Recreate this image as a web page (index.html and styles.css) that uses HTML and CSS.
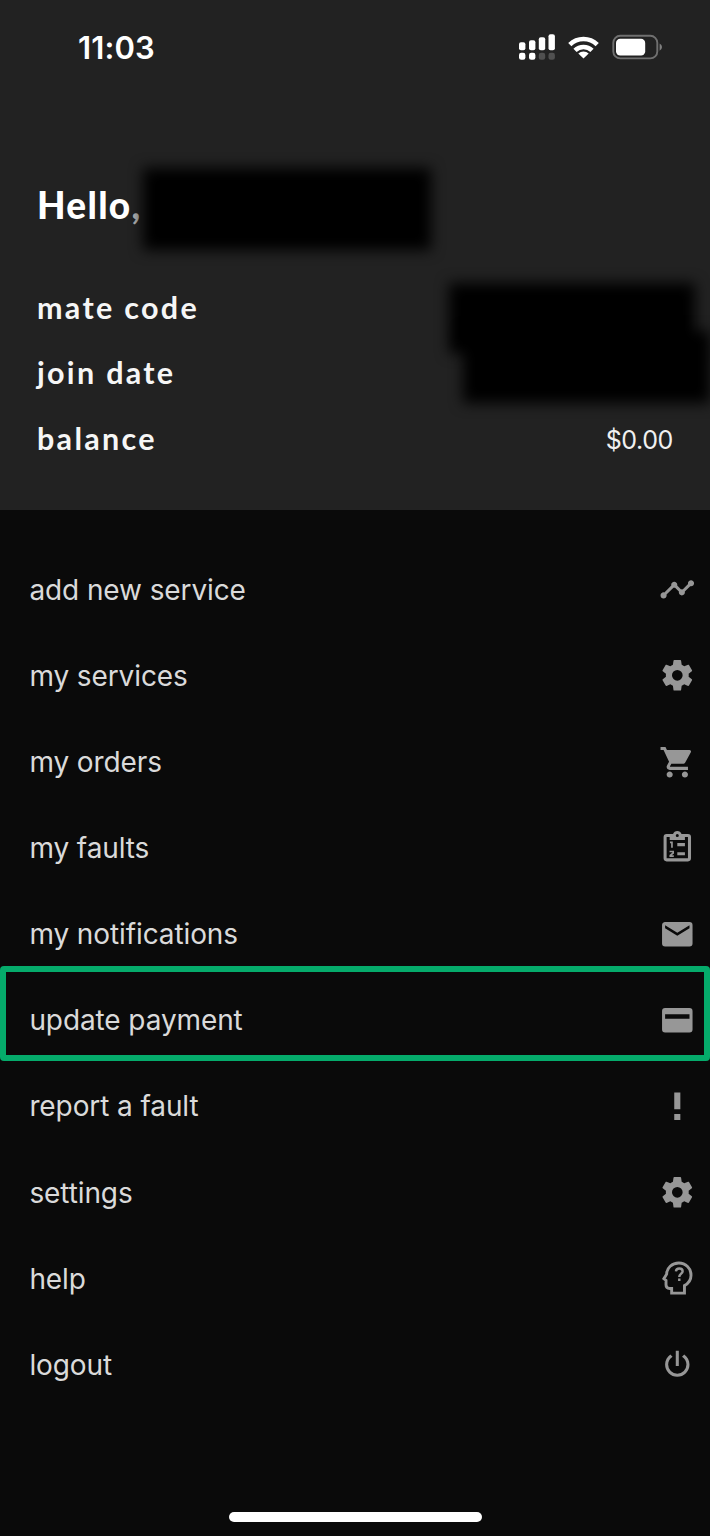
FILE: index.html
```html
<!DOCTYPE html>
<html lang="en">
<head>
<meta charset="utf-8">
<title>Account menu</title>
<link rel="stylesheet" href="styles.css">
</head>
<body>
<div class="screen">
  <header class="profile">
    <div class="status">
      <span class="time">11:03</span>
      <svg class="status-icons" width="146" height="30" viewBox="517 32 146 30">
        <g fill="#fff">
          <rect x="519" y="42.3" width="6.4" height="8" rx="2"/>
          <rect x="529" y="40.3" width="6.4" height="10" rx="2"/>
          <rect x="538.8" y="37.3" width="6.4" height="13" rx="2"/>
          <rect x="548.5" y="34.2" width="6.4" height="16.1" rx="2"/>
          <rect x="519" y="52.8" width="6.4" height="7" rx="2.2"/>
          <rect x="529" y="52.8" width="6.4" height="7" rx="2.2"/>
        </g>
        <g fill="#505050">
          <rect x="538.8" y="52.8" width="6.4" height="7" rx="2.2"/>
          <rect x="548.5" y="52.8" width="6.4" height="7" rx="2.2"/>
        </g>
        <g fill="none" stroke="#fff" stroke-width="4.6">
          <path d="M569.8 44.6A19.7 19.7 0 0 1 597.2 44.6"/>
          <path d="M575 50.4A12.2 12.2 0 0 1 592 50.4"/>
        </g>
        <path d="M583.5 58.6L578.3 53.6A7.4 7.4 0 0 1 588.7 53.6Z" fill="#fff"/>
        <rect x="613.3" y="35.8" width="44" height="22.6" rx="7" fill="none" stroke="#707070" stroke-width="1.9"/>
        <rect x="616" y="38.8" width="29.2" height="16.8" rx="4.2" fill="#fff"/>
        <path d="M659.6 43.4Q662 44.6 662 47.1T659.6 50.8Z" fill="#808080"/>
      </svg>
    </div>
    <h1 class="greeting">Hello<span class="comma">,</span></h1>
    <dl class="details">
      <div class="detail"><dt>mate code</dt><dd></dd></div>
      <div class="detail"><dt>join date</dt><dd></dd></div>
      <div class="detail"><dt>balance</dt><dd>$0.00</dd></div>
    </dl>
    <span class="redact redact-name"></span>
    <span class="redact redact-code"></span>
    <span class="redact redact-date"></span>
  </header>

  <nav class="menu">
    <a class="item"><span>add new service</span>
      <svg class="icon" viewBox="0 0 24 24"><path d="M23 8c0 1.1-.9 2-2 2-.18 0-.35-.02-.51-.07l-3.56 3.55c.05.16.07.34.07.52 0 1.1-.9 2-2 2s-2-.9-2-2c0-.18.02-.36.07-.52l-2.55-2.55c-.16.05-.34.07-.52.07s-.36-.02-.52-.07l-4.55 4.56c.05.16.07.33.07.51 0 1.1-.9 2-2 2s-2-.9-2-2 .9-2 2-2c.18 0 .35.02.51.07l4.56-4.55C8.02 9.36 8 9.18 8 9c0-1.1.9-2 2-2s2 .9 2 2c0 .18-.02.36-.07.52l2.55 2.55c.16-.05.34-.07.52-.07s.36.02.52.07l3.55-3.56C19.02 8.35 19 8.18 19 8c0-1.1.9-2 2-2s2 .9 2 2z"/></svg></a>
    <a class="item"><span>my services</span>
      <svg class="icon" viewBox="0 0 24 24"><path id="cog" d="M12,15.5A3.5,3.5 0 0,1 8.5,12A3.5,3.5 0 0,1 12,8.5A3.5,3.5 0 0,1 15.5,12A3.5,3.5 0 0,1 12,15.5M19.43,12.97C19.47,12.65 19.5,12.33 19.5,12C19.5,11.67 19.47,11.34 19.43,11L21.54,9.37C21.73,9.22 21.78,8.95 21.66,8.73L19.66,5.27C19.54,5.05 19.27,4.96 19.05,5.05L16.56,6.05C16.04,5.66 15.5,5.32 14.87,5.07L14.5,2.42C14.46,2.18 14.25,2 14,2H10C9.75,2 9.54,2.18 9.5,2.42L9.13,5.07C8.5,5.32 7.96,5.66 7.44,6.05L4.95,5.05C4.73,4.96 4.46,5.05 4.34,5.27L2.34,8.73C2.21,8.95 2.27,9.22 2.46,9.37L4.57,11C4.53,11.34 4.5,11.67 4.5,12C4.5,12.33 4.53,12.65 4.57,12.97L2.46,14.63C2.27,14.78 2.21,15.05 2.34,15.27L4.34,18.73C4.46,18.95 4.73,19.03 4.95,18.95L7.44,17.94C7.96,18.34 8.5,18.68 9.13,18.93L9.5,21.58C9.54,21.82 9.75,22 10,22H14C14.25,22 14.46,21.82 14.5,21.58L14.87,18.93C15.5,18.67 16.04,18.34 16.56,17.94L19.05,18.95C19.27,19.03 19.54,18.95 19.66,18.73L21.66,15.27C21.78,15.05 21.73,14.78 21.54,14.63L19.43,12.97Z"/></svg></a>
    <a class="item"><span>my orders</span>
      <svg class="icon" viewBox="0 0 24 24"><path d="M7 18c-1.1 0-1.99.9-1.99 2S5.9 22 7 22s2-.9 2-2-.9-2-2-2zM1 2v2h2l3.6 7.59-1.35 2.45c-.16.28-.25.61-.25.96 0 1.1.9 2 2 2h12v-2H7.42c-.14 0-.25-.11-.25-.25l.03-.12.9-1.63h7.45c.75 0 1.41-.41 1.75-1.03l3.58-6.49A1.003 1.003 0 0 0 20 4H5.21l-.94-2H1zm16 16c-1.1 0-1.99.9-1.99 2s.89 2 1.99 2 2-.9 2-2-.9-2-2-2z"/></svg></a>
    <a class="item"><span>my faults</span>
      <svg class="icon" viewBox="0 0.4 24 24"><path fill-rule="evenodd" d="M19 3h-4.2a3 3 0 0 0-5.6 0H5a2 2 0 0 0-2 2v14a2 2 0 0 0 2 2h14a2 2 0 0 0 2-2V5a2 2 0 0 0-2-2zM12 3a1 1 0 1 1 0 2 1 1 0 0 1 0-2zM5 5h2v2h10V5h2v14H5z"/><path d="M12 9h5v2h-5zM12 15h5v2h-5z"/><path class="line-thin" d="M7.2 8.5h1.3V12M6.9 14.5h2.4v1L7.4 17v.5h2.3"/></svg></a>
    <a class="item"><span>my notifications</span>
      <svg class="icon" viewBox="0 0 24 24"><path d="M20 8l-8 5-8-5V6l8 5 8-5m0-2H4c-1.11 0-2 .89-2 2v12a2 2 0 0 0 2 2h16a2 2 0 0 0 2-2V6a2 2 0 0 0-2-2z"/></svg></a>
    <a class="item item-active"><span>update payment</span>
      <svg class="icon" viewBox="0 0 24 24"><path fill-rule="evenodd" d="M4 4h16a2 2 0 0 1 2 2v12a2 2 0 0 1-2 2H4a2 2 0 0 1-2-2V6a2 2 0 0 1 2-2zM4 8v3h16V8z"/></svg></a>
    <a class="item"><span>report a fault</span>
      <svg class="icon" viewBox="0 0 24 24"><path d="M10 3h4v11h-4zM10 17h4v4h-4z"/></svg></a>
    <a class="item"><span>settings</span>
      <svg class="icon" viewBox="0 0 24 24"><use href="#cog"/></svg></a>
    <a class="item"><span>help</span>
      <svg class="icon icon-tall" viewBox="0 0 24 24"><path class="line" d="M16.7 21.7H8.3V18.7H7c-1.4 0-2.4-1-2.4-2.4V13.4L3.2 12.3 5 9.3C5 5.2 8.6 2 13 2c4.5 0 8 3.5 8 8 0 3-1.6 5.3-4.3 6.8z"/><path class="line-mid" d="M11.1 7.4c.1-1.2 1-1.8 2.2-1.8 1.3 0 2.2.7 2.2 1.8 0 1.5-2.2 1.8-2.2 3.8M13.3 12.2v1.6"/></svg></a>
    <a class="item"><span>logout</span>
      <svg class="icon" viewBox="0 0.5 24 24"><path d="M16.56,5.44L15.11,6.89C16.84,7.94 18,9.83 18,12A6,6 0 0,1 12,18A6,6 0 0,1 6,12C6,9.83 7.16,7.94 8.88,6.88L7.44,5.44C5.36,6.88 4,9.28 4,12A8,8 0 0,0 12,20A8,8 0 0,0 20,12C20,9.28 18.64,6.88 16.56,5.44M13,3H11V13H13"/></svg></a>
  </nav>
  <div class="home-bar"></div>
</div>
</body>
</html>
```
FILE: styles.css
```css
*, *::after { box-sizing: border-box; }
body { margin: 0; background: #0a0a0a; }
.screen {
  width: 710px;
  height: 1536px;
  display: flex;
  flex-direction: column;
  overflow: hidden;
  background: #0a0a0a;
  font-family: Inter, "Liberation Sans", sans-serif;
}
.profile {
  position: relative;
  height: 510px;
  padding: 32px 37px 0;
  background: #222;
  color: #fff;
  overflow: hidden;
}
.status {
  display: flex;
  justify-content: space-between;
  align-items: center;
  height: 30px;
  padding: 0 10px 0 41px;
}
.time { padding-top: 2px; font-size: 31px; font-weight: 600; line-height: 30px; letter-spacing: 0.1px; }
.status-icons { display: block; }
.greeting {
  margin: 118px 0 0;
  font: 900 37px/50px Lato, sans-serif;
  letter-spacing: 1.3px;
}
.comma { color: #b4b4b4; }
.details { margin: 46px 0 0; }
.detail {
  display: flex;
  justify-content: space-between;
  align-items: center;
  height: 65.5px;
}
.detail dt {
  padding-bottom: 4px;
  font: 700 30.5px/40px Lato, sans-serif;
  letter-spacing: 2.3px;
  color: #f6f6f6;
}
.detail dd { margin: 0; font-size: 25px; color: #f0f0f0; letter-spacing: -0.4px; }

/* Blurred covers over private values */
.redact { position: absolute; background: #000; filter: blur(7px); }
.redact-name { left: 143px; top: 168px; width: 288px; height: 82px; }
.redact-code { left: 449px; top: 283px; width: 246px; height: 70px; }
.redact-date { left: 463px; top: 331px; width: 247px; height: 72px; }

.menu { flex: 1; padding-top: 36.5px; }
.item {
  position: relative;
  display: flex;
  justify-content: space-between;
  align-items: center;
  height: 86.15px;
  padding: 0 14.7px 0 29.4px;
  font-size: 28px;
  letter-spacing: -0.1px;
  color: #dadada;
}
.item-active::after {
  content: "";
  position: absolute;
  left: 0;
  right: 0;
  top: -11px;
  height: 95px;
  border: 6.5px solid #05ab6b;
  border-radius: 4px;
}
.icon { width: 36.6px; height: 36.6px; fill: #979797; }
.line, .line-mid, .line-thin { fill: none; stroke: #979797; }
.line { stroke-width: 1.9; }
.line-mid { stroke-width: 1.6; }
.line-thin { stroke-width: 1.1; }
.home-bar {
  align-self: center;
  width: 253px;
  height: 10px;
  margin-bottom: 14px;
  border-radius: 5px;
  background: #fff;
}
```
